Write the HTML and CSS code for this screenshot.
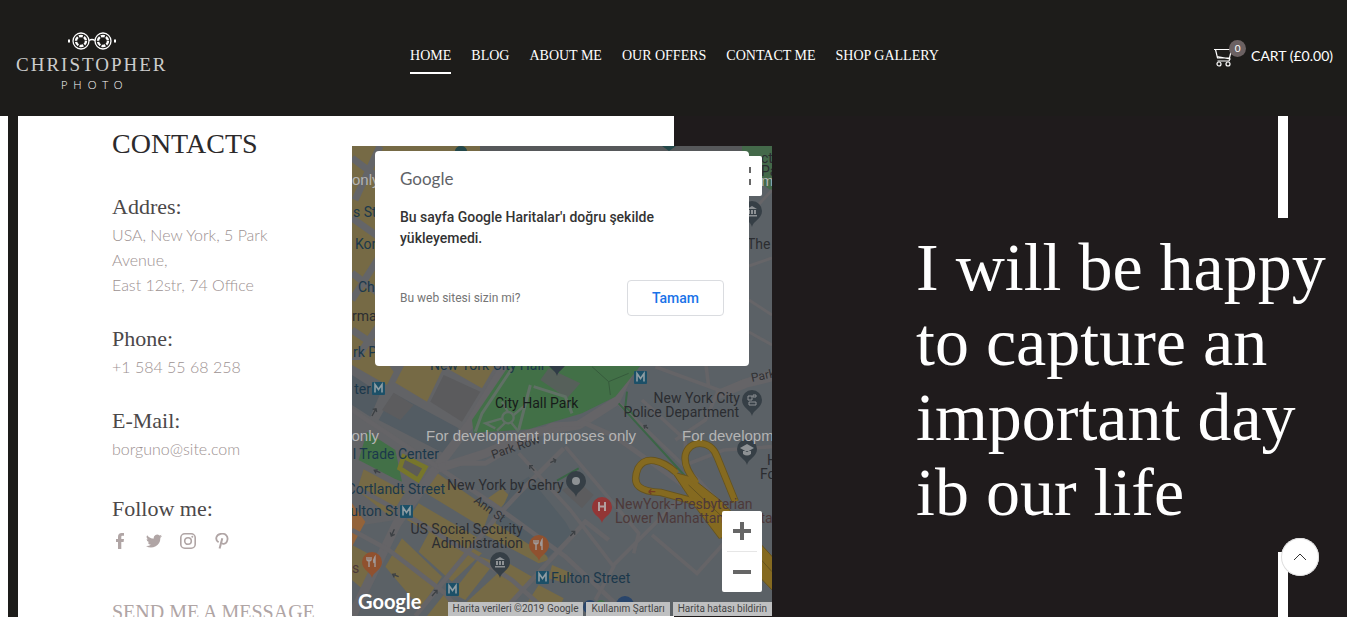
FILE: index.html
```html
<!DOCTYPE html>
<html lang="en">
<head>
<meta charset="utf-8">
<meta name="viewport" content="width=device-width, initial-scale=1">
<title>Christopher Photo</title>
<link rel="stylesheet" href="styles.css">
</head>
<body>
<header class="site-header">
  <a class="logo" href="#">
    <svg class="logo-mark" viewBox="0 0 48 18" aria-hidden="true">
      <g fill="none" stroke="#fff">
        <circle cx="13" cy="9" r="8" stroke-width="1.3"/>
        <circle cx="35" cy="9" r="8" stroke-width="1.3"/>
        <circle cx="13" cy="9" r="5" stroke-width="2.4" stroke-dasharray="4 1.2"/>
        <circle cx="35" cy="9" r="5" stroke-width="2.4" stroke-dasharray="4 1.2"/>
        <path d="M21 8.500q3-2 6 0" stroke-width="1.4"/>
      </g>
      <path d="M0 7.500h2v3H0zM46 7.500h2v3h-2z" fill="#fff"/>
    </svg>
    <span class="logo-name">CHRISTOPHER</span>
    <span class="logo-sub">PHOTO</span>
  </a>
  <nav class="nav">
    <a class="nav-link nav-link-active" href="#">HOME</a>
    <a class="nav-link" href="#">BLOG</a>
    <a class="nav-link" href="#">ABOUT ME</a>
    <a class="nav-link" href="#">OUR OFFERS</a>
    <a class="nav-link" href="#">CONTACT ME</a>
    <a class="nav-link" href="#">SHOP GALLERY</a>
  </nav>
  <a class="cart" href="#">
    <span class="cart-icon">
      <svg viewBox="0 0 20 20" width="20" height="20" fill="none" stroke="#fff" stroke-width="1.2" aria-hidden="true">
        <path d="M0 2.500h17.500l-2 8.500H3.500L1.500 2.500M3 9.500l13 2.500-1 2H3.500"/>
        <circle cx="5" cy="17" r="2"/><circle cx="14" cy="17" r="2"/>
      </svg>
      <span class="cart-badge">0</span>
    </span>
    <span>CART (£0.00)</span>
  </a>
</header>

<main class="page">
  <section class="contacts">
    <h1 class="title">CONTACTS</h1>
    <div class="contact">
      <h2 class="label">Addres:</h2>
      <p class="value">USA, New York, 5 Park Avenue,<br>East 12str, 74 Office</p>
    </div>
    <div class="contact">
      <h2 class="label">Phone:</h2>
      <p class="value">+1 584 55 68 258</p>
    </div>
    <div class="contact">
      <h2 class="label">E-Mail:</h2>
      <p class="value">borguno@site.com</p>
    </div>
    <div class="follow">
      <h2 class="label">Follow me:</h2>
      <div class="social">
        <a href="#" aria-label="Facebook"><svg viewBox="0 0 16 16"><path d="M6 16V9H4V6h2V4c0-2.600 1.300-4 3.800-4H12v2.800h-1.400C9.500 2.800 9.300 3.200 9.300 4v2H12l-.4 3H9.300v7z"/></svg></a>
        <a href="#" aria-label="Twitter"><svg viewBox="0 0 24 24"><path d="M24 4.600a10 10 0 0 1-2.800.8 5 5 0 0 0 2.100-2.700 10 10 0 0 1-3.100 1.200 4.900 4.900 0 0 0-8.400 4.500A14 14 0 0 1 1.700 3.200a4.900 4.900 0 0 0 1.500 6.500 5 5 0 0 1-2.200-.6 4.900 4.900 0 0 0 3.900 4.900 5 5 0 0 1-2.200.1 4.900 4.900 0 0 0 4.600 3.400A10 10 0 0 1 0 19.500 14 14 0 0 0 21.500 7.100 10 10 0 0 0 24 4.600z"/></svg></a>
        <a href="#" aria-label="Instagram"><svg viewBox="0 0 16 16"><g fill="none" stroke="#b0a5a5" stroke-width="1.600"><rect x=".8" y=".8" width="14.400" height="14.400" rx="4"/><circle cx="8" cy="8" r="3.300"/></g><circle cx="12.300" cy="3.700" r="1"/></svg></a>
        <a href="#" aria-label="Pinterest"><svg viewBox="0 0 16 16"><path d="M4.600 9.300C2.500 8 1.800 6.300 2.500 4 3.600.6 9.500-.5 12.300 2.300c2.400 2.500 1.100 8.200-2.400 8.500-1 .1-1.600-.3-2-.9" fill="none" stroke="#b0a5a5" stroke-width="1.800"/><path d="M8.300 5.200 5.600 15.600" stroke="#b0a5a5" stroke-width="2"/></svg></a>
      </div>
    </div>
    <h2 class="subtitle">SEND ME A MESSAGE</h2>
  </section>

  <section class="map" aria-label="Map">
    <svg class="map-canvas" viewBox="352 146 420 470" preserveAspectRatio="xMidYMid slice">
      <defs>
        <g id="metro"><rect width="13" height="13" rx="1" fill="#1c5068"/><path d="M3 10.500v-8l3.500 5 3.500-5v8" fill="none" stroke="#8f9da3" stroke-width="1.600"/></g>
        <path id="pin" d="M0 15C-1 9-10 7-10-1a10 10 0 0 1 20 0c0 8-9 10-10 16z"/>
        <g id="fork" fill="none" stroke="#a09a9a" stroke-width="1.400"><path d="M-3-6v10M-5-6v3q2 2 4 0v-3M3 4v-10q-2 3-1 6"/></g>
        <path id="bank" d="M-5-3 0-6l5 3zM-4-2h2v4h-2zM-1-2h2v4h-2zM2-2h2v4H2zM-5 3H5v1.500H-5z" fill="#8d9194"/>
      </defs>
      <rect x="352" y="146" width="420" height="470" fill="#5b6166"/>
      <!-- north-west strip -->
      <path d="M352 146h180v100l-100 120h-80z" fill="#766a45"/>
      <path d="M352 158 395 190M352 218 400 252M352 273 420 325M352 330 400 362M352 300 395 232M352 365 410 280M355 200 380 146" fill="none" stroke="#646568" stroke-width="7"/>
      <path d="M480 146h262v80H480z" fill="#56585a"/>
      <path d="M742 146h30v45l-30-20z" fill="#44694a"/>
      <path d="M749 300 772 315M749 266 772 258M749 332 772 345M749 215 772 190" fill="none" stroke="#666568" stroke-width="3"/>
      <!-- lower streets, drawn on a grid three times as fine -->
      <g transform="translate(352 360) scale(.333333)">
        <path d="M0 0H480L260 340 130 480 0 500z" fill="#626366"/>
        <path d="M0 0H100L125 35 105 75 0 15z" fill="#766a45"/>
        <path d="M165 0H285L225 125 130 68z" fill="#766a45"/>
        <path d="M320 0H440L390 85 285 25z" fill="#766a45"/>
        <path d="M275 45 385 95 330 185 235 125z" fill="#5b5b5d"/>
        <path d="M0 45 85 100 55 170 0 135z" fill="#525b62"/>
        <path d="M125 100 320 205 285 285 80 180z" fill="#535c63"/>
        <path d="M125 98 185 135 145 180 90 150z" fill="#5c5c5e"/>
        <!-- park west of Broadway -->
        <path d="M45 215 130 270 150 365 125 355 20 300z" fill="#427047"/>
        <path d="m155 290 65 32-22 38-55-35z" fill="#5c5b57" stroke="#77762b" stroke-width="14"/>
        <!-- yellow blocks -->
        <g fill="#766a45">
          <path d="M35 328 160 395 115 470 15 390zM250 335 415 450 395 505 215 395zM200 430 380 535 335 575 165 480zM425 480 570 560 590 600 560 610 400 525zM0 555 75 595 35 690 0 660zM150 535 270 650 205 745 100 620zM240 500 390 580 300 665 200 575zM385 590 430 605 340 720 300 700zM470 610 540 650 440 768 340 730zM400 420 450 385 475 410 440 450zM455 460 485 430 515 460 490 488zM600 615 660 640 640 670 590 655zM560 675 635 715 610 768H500zM275 705 335 735 310 768H225z"/>
        </g>
        <path d="M0 430 40 485 0 560z" fill="#93633a"/>
        <path d="M480 380 530 350 640 485 660 520 590 590 430 490z" fill="#535d64"/>
        <!-- avenues -->
        <g fill="none" stroke="#656467">
          <path d="M0 768 135 490 245 335 355 190 470 0" stroke-width="28"/>
          <path d="M0 150 270 330 420 430 640 590 830 768M0 375 180 475 370 590 480 660 600 768M0 510 110 570 280 700 330 768M190 768 430 475 500 400 635 265M440 768 700 485 770 540" stroke-width="14"/>
          <path d="M260 325 400 280 530 220 680 195 790 125 850 0" stroke-width="26"/>
          <path d="M280 310 400 310 600 195 700 190 790 230 1000 380" stroke-width="15"/>
          <path d="M500 280 655 450 785 620 730 720M640 260 860 520 845 580M780 620 980 420M900 525 1035 640 1160 500M800 130 1040 360 1260 600M870 120 1000 240 1000 315 1115 270 1260 260M910 20 1100 90 1060 180 970 240M1100 100 1170 65 1260 35M1060 0 1070 80" stroke-width="11"/>
          <path d="M1095 105 1180 70 1260 50" stroke-width="28"/>
        </g>
        <path d="M630 390 680 365 725 405 690 445z" fill="#5c5c5e"/>
        <!-- City Hall Park -->
        <path d="M470 18H865L790 110 690 160 530 208 365 218 360 180z" fill="#427047"/>
        <path d="m590 25 95 45-40 45-80-55z" fill="#56605a"/>
        <g fill="none" stroke="#607065">
          <path d="M370 215 390 160 480 25M535 75 500 210M545 80 640 110 660 160" stroke-width="9"/>
          <g stroke-width="7"><circle cx="468" cy="173" r="17"/><path d="M468 156 450 125M451 175 400 190 430 205M478 188 500 215M485 165 520 135M460 188 435 212"/></g>
        </g>
        <path d="M720 20 770 65 830 40M770 65 775 105" fill="none" stroke="#365a3c" stroke-width="3"/>
        <path d="M800 130 1010 360M825 95 820 140 850 170M615 362 680 325" fill="none" stroke="#3b6546" stroke-width="6"/>
        <!-- bridge ramps -->
        <g fill="none" stroke-linejoin="round">
          <path d="M970 335C930 300 880 285 858 325 835 380 870 395 925 397L1030 425 1110 530M1150 425 1095 290C1075 235 1010 240 1000 285 995 315 1010 340 1030 365" stroke="#65531f" stroke-width="22"/>
          <path d="M960 335 1015 350 1110 425 1270 600V700L1100 525 1010 410z" fill="#856a20" stroke="#65531f" stroke-width="3"/>
          <path d="M975 340C930 300 880 285 858 325 835 380 870 395 925 397L1030 425 1110 530M1150 425 1095 290C1075 235 1010 240 1000 285 995 315 1010 340 1035 370" stroke="#856a20" stroke-width="17"/>
          <path d="M1010 375 1110 470 1260 635" stroke="#65531f" stroke-width="3"/>
          <path d="M910 395h-20m0 0 8-7m-8 7 8 7" stroke="#743c24" stroke-width="4"/>
        </g>
        <g fill="none" stroke="#3c4044" stroke-width="4">
          <path d="m60 168 12-22m-10 2 10-2 2 10M85 338l-18-7m5 9-5-9 10-1M118 528l9-20m-12 9 3 11 10-5M140 650l-18-7m5 9-5-9 10-1M240 708l15-17m-10 0 10 0v10M547 332l-14-15m0 10v-10h10M595 308l16-8m-8-4 8 4-3 8M655 528l13-14m-10 0h10v10M888 205l-12-8m2 9-2-9 9-1"/>
        </g>
      </g>
      <!-- markers -->
      <use href="#metro" x="372" y="382"/><use href="#metro" x="400" y="505"/><use href="#metro" x="446" y="583"/><use href="#metro" x="536" y="571"/><use href="#metro" x="634" y="371"/>
      <use href="#pin" x="752" y="212" fill="#363f46"/><use href="#bank" x="752" y="212"/>
      <use href="#pin" x="557" y="361" fill="#303c46"/>
      <use href="#pin" x="752" y="401" fill="#363f46"/><path d="M748 396h4v4h-4zM753 395h3v2h-3zM749 402h7v3h-7z" fill="none" stroke="#8d9194"/>
      <use href="#pin" x="747" y="450" fill="#363f46"/><path d="M740 448 747 444 754 448 747 452zM743 451v3q4 3 8 0v-3" fill="#8d9194"/>
      <use href="#pin" x="576" y="482" fill="#363f46"/><circle cx="576" cy="481" r="4" fill="#8d9194"/>
      <use href="#pin" x="602" y="508" fill="#933636"/><path d="M599 502v9M605 502v9M599 506.500h6" stroke="#b2a0a0" stroke-width="2"/>
      <use href="#pin" x="539" y="546" fill="#90512f"/><use href="#fork" x="539" y="546"/>
      <use href="#pin" x="372" y="563" fill="#90512f"/><use href="#fork" x="372" y="563"/>
      <use href="#pin" x="500" y="563" fill="#363f46"/><use href="#bank" x="500" y="563"/>
      <circle cx="590" cy="607" r="7" fill="#29456b"/><circle cx="601" cy="605" r="5" fill="#427047"/><circle cx="625" cy="605" r="9" fill="#29456b"/>
      <path d="M455 151a6 5 0 0 1 12 0M662 146l7 5 7-5" fill="#24484a"/>
      <!-- place names -->
      <g class="map-place">
        <g fill="#1b384b">
          <text x="353" y="217">s St</text><text x="355" y="249">Kor</text><text x="358" y="292">Ch</text><text x="353" y="357">rk P</text>
          <text x="371" y="394" text-anchor="end">ter</text><text x="439" y="459" text-anchor="end">l Trade Center</text>
          <text x="445" y="494" text-anchor="end">Cortlandt Street</text><text x="398" y="516" text-anchor="end">ulton St</text>
          <text x="430" y="370">New York City Hall</text><text x="551" y="583">Fulton Street</text>
        </g>
        <g fill="#2b2d31">
          <text x="352" y="321">rma</text><text x="447" y="490">New York by Gehry</text>
          <text x="523" y="534" text-anchor="end">US Social Security</text><text x="523" y="548" text-anchor="end">Administration</text>
          <text x="740" y="403" text-anchor="end">New York City</text><text x="739" y="417" text-anchor="end">Police Department</text>
          <text x="747" y="249">The</text><text x="761" y="163">ct</text><text x="761" y="176">Pa</text><text x="767" y="465">H</text><text x="760" y="479">Fo</text>
        </g>
        <text x="495" y="408" fill="#171b1a">City Hall Park</text>
        <g fill="#4d393a"><text x="615" y="509">NewYork-Presbyterian</text><text x="615" y="523">Lower Manhattan</text><text x="757" y="523">ita</text><text x="352" y="573">s</text></g>
        <g fill="#303134" class="map-street"><text transform="translate(493 459) rotate(-19)">Park Row</text><text transform="translate(473 502) rotate(36)">Ann St</text><text transform="translate(752 382) rotate(-12)">Park</text></g>
      </g>
      <g class="map-notice"><text x="352" y="185">only</text><text x="761" y="186">m</text><text x="379" y="441" text-anchor="end">only</text><text x="426" y="441">For development purposes only</text><text x="682" y="441">For developm</text></g>
      <text class="map-brand" x="358" y="609">Google</text>
    </svg>
    <button class="fullscreen" type="button" aria-label="Toggle fullscreen"><svg viewBox="0 0 18 18" width="18" height="18" fill="none" stroke="#666" stroke-width="2"><path d="M1 6V1h5M12 1h5v5M17 12v5h-5M6 17H1v-5"/></svg></button>
    <div class="zoom">
      <button type="button" aria-label="Zoom in"><svg viewBox="0 0 18 18" width="18" height="18"><path d="M7 0h4v7h7v4h-7v7H7v-7H0V7h7z"/></svg></button>
      <button type="button" aria-label="Zoom out"><svg viewBox="0 0 18 18" width="18" height="18"><path d="M0 7h18v4H0z"/></svg></button>
    </div>
    <div class="credits"><span>Harita verileri ©2019 Google</span><a href="#">Kullanım Şartları</a><a href="#">Harita hatası bildirin</a></div>
    <div class="dialog" role="dialog" aria-label="Google">
      <div class="dialog-brand">Google</div>
      <p class="dialog-text">Bu sayfa Google Haritalar'ı doğru şekilde yükleyemedi.</p>
      <div class="dialog-actions"><a href="#">Bu web sitesi sizin mi?</a><button type="button">Tamam</button></div>
    </div>
  </section>

  <section class="intro">
    <div class="bar bar-top"></div>
    <p class="quote">I will be happy<br>to capture an<br>important day<br>ib our life</p>
    <div class="bar bar-bottom"></div>
  </section>
</main>
<button class="to-top" type="button" aria-label="Back to top"><svg viewBox="0 0 14 8" width="14" height="8" fill="none" stroke="#333"><path d="M1 7 7 1l6 6"/></svg></button>
</body>
</html>
```
FILE: styles.css
```css
* { box-sizing: border-box; }
body {
  margin: 0;
  height: 100vh;
  display: flex;
  flex-direction: column;
  overflow: hidden;
  background: #fff;
  font-family: Lato, "Liberation Sans", sans-serif;
}
a { color: inherit; text-decoration: none; }
button { font: inherit; border: 0; padding: 0; cursor: pointer; }
h1, h2, p { margin: 0; font-weight: 400; }

.site-header {
  flex: none;
  height: 116px;
  padding: 0 14px 0 16px;
  display: grid;
  grid-template-columns: 1fr auto 1fr;
  align-items: center;
  background: #1d1c1a;
  color: #fff;
}
.logo { justify-self: start; display: flex; flex-direction: column; align-items: center; padding-top: 8px; }
.logo-mark { width: 48px; height: 18px; }
.logo-name { font: 19px/26px "Liberation Serif", serif; letter-spacing: 2px; margin-top: 2px; color: #ccc; }
.logo-sub { font: 300 11px/14px Lato, sans-serif; letter-spacing: 6px; padding-left: 6px; }
.nav { display: flex; gap: 20px; font: 14px/20px "Liberation Serif", serif; }
.nav-link { padding: 4px 0 6px; border-bottom: 2px solid transparent; white-space: nowrap; }
.nav-link-active { border-color: #fff; }
.cart { justify-self: end; display: flex; align-items: center; gap: 17px; font-size: 14px; line-height: 20px; margin-bottom: 4px; }
.cart-icon { position: relative; display: flex; width: 20px; }
.cart-icon svg { margin-top: 2px; }
.cart-badge {
  position: absolute;
  left: 15px;
  top: -5px;
  width: 17px;
  height: 17px;
  border-radius: 50%;
  background: #6b6162;
  font-size: 10px;
  line-height: 17px;
  text-align: center;
}

.page {
  flex: 1;
  min-height: 0;
  display: grid;
  grid-template-columns: 334px 420px 1fr;
  margin-left: 8px;
  border-left: 10px solid #1d1c1a;
  background: linear-gradient(90deg, #fff 656px, #1f1b1c 656px);
}
.contacts { padding: 10px 12px 0 94px; color: #4b4849; white-space: nowrap; }
.title { font: 28px/36px "Liberation Serif", serif; color: #2c2a2b; margin-bottom: 31px; }
.contact { margin-bottom: 28px; }
.label { font: 22px/28px "Liberation Serif", serif; margin-bottom: 1px; }
.value { max-width: 190px; white-space: normal; font-size: 16px; font-weight: 300; line-height: 25px; color: #9c9191; }
.follow { margin: 34px 0 50px; }
.social { display: flex; gap: 18px; padding-top: 9px; }
.social svg { display: block; width: 16px; height: 16px; fill: #b0a5a5; }
.subtitle { font: 20px/26px "Liberation Serif", serif; color: #b0a5a5; }

.map { position: relative; height: 470px; margin-top: 30px; font-family: Roboto, sans-serif; overflow: hidden; }
.map-canvas { display: block; width: 100%; height: 100%; }
.map-place { font-size: 14px; }
.map-street { font-size: 12px; }
.map-notice { font: 15px "Liberation Sans", sans-serif; fill: #b4b4b4; }
.map-brand { font: 700 20px Lato, sans-serif; fill: #fff; }
.fullscreen { position: absolute; right: 10px; top: 10px; width: 40px; height: 40px; border-radius: 2px; background: #fff; display: grid; place-items: center; }
.zoom { position: absolute; right: 10px; bottom: 24px; width: 40px; padding: 0 5px; border-radius: 2px; background: #fff; }
.zoom button { display: grid; place-items: center; width: 30px; height: 40px; background: #fff; }
.zoom button + button { height: 41px; border-top: 1px solid #e6e6e6; }
.zoom svg { fill: #666; }
.credits { position: absolute; right: 0; bottom: 0; display: flex; gap: 3px; font-size: 10px; line-height: 14px; color: #444; }
.credits > * { background: #bfc0c1; padding: 0 5px; white-space: nowrap; }
.dialog { position: absolute; left: 23px; right: 23px; top: 5px; height: 215px; padding: 16px 25px; border-radius: 4px; background: #fff; }
.dialog-brand { font: 17px/24px Lato, sans-serif; color: #5f6368; }
.dialog-text { margin-top: 16px; font-size: 14px; line-height: 21px; font-weight: 500; color: #333; }
.dialog-actions { display: flex; justify-content: space-between; align-items: center; margin-top: 31px; font-size: 12px; color: #757575; }
.dialog-actions button { width: 97px; height: 36px; border: 1px solid #dadce0; border-radius: 4px; background: #fff; color: #1a73e8; font-size: 14px; font-weight: 500; }

.intro { display: flex; flex-direction: column; min-width: 0; }
.bar { flex: none; width: 10px; margin: 0 59px 0 auto; background: #fff; }
.bar-top { height: 102px; }
.bar-bottom { flex: 1; }
.quote { padding: 12px 0 22px 144px; font: 68px/75px "Liberation Serif", serif; white-space: nowrap; color: #fff; }
.to-top { position: fixed; right: 28px; bottom: 41px; width: 38px; height: 38px; border-radius: 50%; background: #fff; display: grid; place-items: center; box-shadow: 0 0 0 1px #ddd inset; }
```
